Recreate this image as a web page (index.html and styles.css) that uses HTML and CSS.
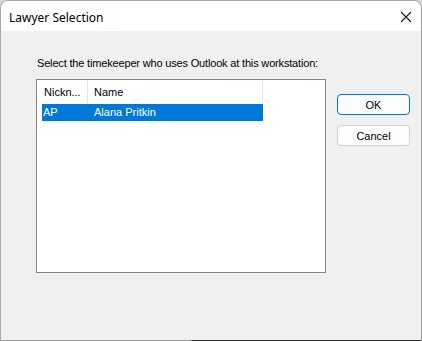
FILE: index.html
```html
<!DOCTYPE html>
<html lang="en">

<head>
    <meta charset="UTF-8">
    <title>Lawyer Selection</title>
    <link rel="stylesheet" href="styles.css">
</head>

<body>
    <div class="window">
        <div class="titlebar">
            <span class="title">Lawyer Selection</span>
            <svg class="close" width="12" height="12" viewBox="0 0 12 12">
                <path d="M1 1 L11 11 M11 1 L1 11" stroke="#1a1a1a" stroke-width="1.1" fill="none" />
            </svg>
        </div>

        <div class="content">
            <div class="left">
                <p class="label">Select the timekeeper who uses Outlook at this workstation:</p>
                <div class="listbox">
                    <div class="row header">
                        <span class="col nick">Nickn...</span>
                        <span class="col name">Name</span>
                    </div>
                    <div class="row selected">
                        <span class="col nick">AP</span>
                        <span class="col name">Alana Pritkin</span>
                    </div>
                </div>
            </div>

            <div class="buttons">
                <button class="button default">OK</button>
                <button class="button">Cancel</button>
            </div>
        </div>
        <div class="bottomline"></div>
    </div>
</body>

</html>
```

FILE: styles.css
```css
body {
    margin: 0;
    padding: 0;
    background-color: #d9d9d9;
    font-family: "Liberation Sans", Arial, sans-serif;
}

.window {
    box-sizing: border-box;
    width: 422px;
    height: 341px;
    border: 1px solid #a8a8a8;
    border-bottom: none;
    border-right-color: #9c9c9c;
    border-radius: 8px 8px 0 0;
    background-color: #f0f0f0;
    overflow: hidden;
    display: flex;
    flex-direction: column;
}

.titlebar {
    height: 30px;
    background-color: #ffffff;
    display: flex;
    align-items: center;
    justify-content: space-between;
    padding: 0 9px 0 8px;
    flex-shrink: 0;
}

.title {
    font-family: "Noto Sans", sans-serif;
    font-size: 12px;
    color: #000;
    margin-top: 2px;
}

.close {
    margin-top: 1px;
}

.content {
    flex: 1;
    display: flex;
    padding: 0 11px 0 35px;
}

.left {
    width: 290px;
}

.label {
    font-size: 11px;
    color: #000;
    margin: 26px 0 0 1px;
    line-height: 13px;
    white-space: nowrap;
    letter-spacing: -0.17px;
}

.listbox {
    margin-top: 9px;
    width: 290px;
    height: 194px;
    border: 1px solid #848484;
    background-color: #fff;
    box-sizing: border-box;
}

.row {
    display: flex;
    font-size: 11px;
}

.row.header {
    height: 23px;
    align-items: center;
    color: #000;
}

.row.header .col {
    height: 23px;
    line-height: 24px;
    border-right: 1px solid #e5e5e5;
}

.row.selected {
    margin: 1px 0 0 5px;
    width: 221px;
    height: 17px;
    line-height: 17px;
    background-color: #0078d7;
    color: #fff;
}

.col {
    box-sizing: border-box;
    padding-left: 2px;
}

.header .nick {
    width: 51px;
    padding-left: 7px;
}

.header .name {
    width: 175px;
    padding-left: 6px;
}

.selected .nick {
    width: 46px;
    padding-left: 1px;
}

.selected .name {
    padding-left: 6px;
}

.buttons {
    margin-left: 11px;
    padding-top: 63px;
    display: flex;
    flex-direction: column;
    gap: 10px;
}

.button {
    width: 73px;
    height: 21px;
    font-family: "Liberation Sans", Arial, sans-serif;
    font-size: 11px;
    color: #000;
    background-color: #fdfdfd;
    border: 1px solid #d0d0d0;
    border-radius: 4px;
    padding: 0;
    cursor: pointer;
}

.button.default {
    border-color: #0078d7;
}

.bottomline {
    height: 1px;
    background: linear-gradient(to right, #9a9a9a 0, #9a9a9a 190px, #2b2b2b 191px, #2b2b2b 100%);
}
```
